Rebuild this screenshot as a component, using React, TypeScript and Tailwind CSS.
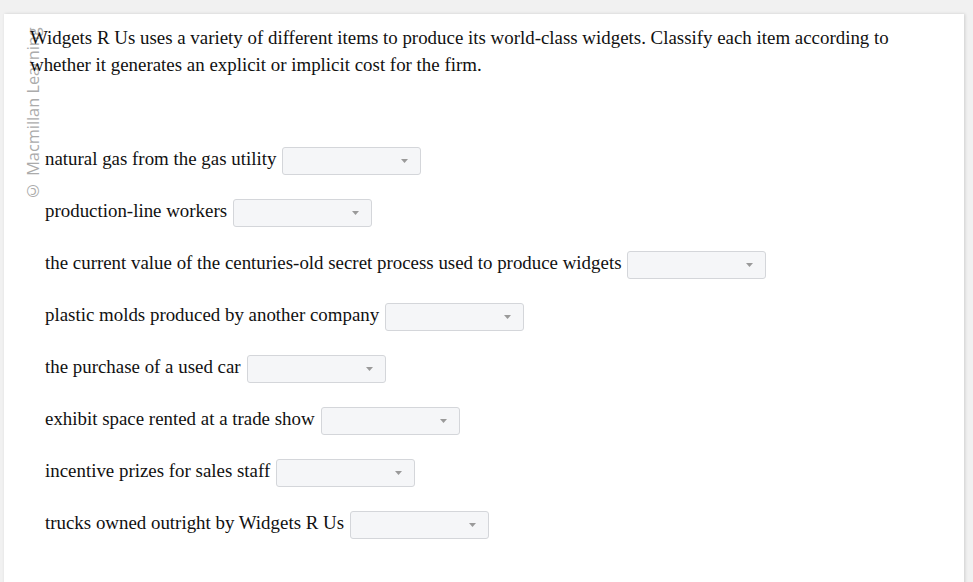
const items = [
  "natural gas from the gas utility",
  "production-line workers",
  "the current value of the centuries-old secret process used to produce widgets",
  "plastic molds produced by another company",
  "the purchase of a used car",
  "exhibit space rented at a trade show",
  "incentive prizes for sales staff",
  "trucks owned outright by Widgets R Us",
];

function Dropdown() {
  return (
    <div className="ml-[6px] flex h-[28px] w-[139px] shrink-0 items-center justify-end rounded-[3px] border border-[#d4d6da] bg-[#f5f6f8] pr-[12px]">
      <svg width="7" height="4" viewBox="0 0 7 4">
        <path d="M0 0h7L3.5 4z" fill="#9a9a9a" />
      </svg>
    </div>
  );
}

export default function App() {
  return (
    <div className="h-[582px] overflow-hidden bg-[#f1f1f1] pl-[4px] pt-[14px]">
      <div className="relative h-[600px] w-[960px] bg-white pl-[26px] pt-[10px] shadow-[1px_0_3px_rgba(0,0,0,0.15)]">
        {/* watermark */}
        <div className="absolute left-[21px] top-[7px] h-[181px] rotate-180 whitespace-nowrap font-['Open_Sans',sans-serif] text-[16.3px] leading-[17px] text-[#ababab] [writing-mode:vertical-rl]">
          © Macmillan Learning
        </div>

        <p className="relative pr-[50px] font-['Liberation_Serif',serif] text-[18.9px] leading-[27px] text-[#111]">
          Widgets R Us uses a variety of different items to produce its world-class widgets. Classify each item according to
          whether it generates an explicit or implicit cost for the firm.
        </p>

        <div className="mt-[57px] flex flex-col pl-[15px]">
          {items.map((t) => (
            <div key={t} className="flex h-[52px] items-center font-['Liberation_Serif',serif] text-[18.9px] text-[#111]">
              <span className="-mt-[3px]">{t}</span>
              <Dropdown />
            </div>
          ))}
        </div>
      </div>
    </div>
  );
}
